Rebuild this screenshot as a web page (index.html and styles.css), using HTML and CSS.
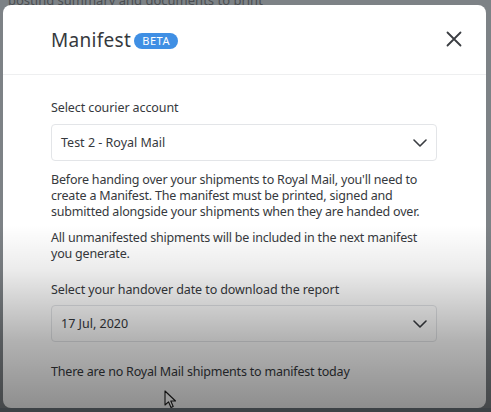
FILE: index.html
```html
<!DOCTYPE html>
<html>
<head>
<meta charset="utf-8">
<link rel="stylesheet" href="styles.css">
</head>
<body>
<div class="backdrop">
  <div class="behind">posting summary and documents to print</div>
  <div class="modal">
    <div class="modal-header">
      <h1 class="title">Manifest <span class="badge">BETA</span></h1>
      <button class="close" aria-label="Close">
        <svg width="16" height="16" viewBox="0 0 16 16"><path d="M1.5 1.5 L14.5 14.5 M14.5 1.5 L1.5 14.5" stroke="#3a3d42" stroke-width="1.8" fill="none" stroke-linecap="round"/></svg>
      </button>
    </div>
    <div class="modal-body">
      <label class="label">Select courier account</label>
      <div class="select">
        <span>Test 2 - Royal Mail</span>
        <svg class="chev" width="14" height="8" viewBox="0 0 14 8"><path d="M1 1 L7 7 L13 1" stroke="#3a3d42" stroke-width="1.6" fill="none" stroke-linecap="round" stroke-linejoin="round"/></svg>
      </div>
      <p class="text">Before handing over your shipments to Royal Mail, you'll need to create a Manifest. The manifest must be printed, signed and submitted alongside your shipments when they are handed over.</p>
      <p class="text">All unmanifested shipments will be included in the next manifest you generate.</p>
      <label class="label label-date">Select your handover date to download the report</label>
      <div class="select">
        <span>17 Jul, 2020</span>
        <svg class="chev" width="14" height="8" viewBox="0 0 14 8"><path d="M1 1 L7 7 L13 1" stroke="#3a3d42" stroke-width="1.6" fill="none" stroke-linecap="round" stroke-linejoin="round"/></svg>
      </div>
      <p class="text note">There are no Royal Mail shipments to manifest today</p>
    </div>
  </div>
  <div class="shade"></div>
  <svg class="cursor" width="14" height="20" viewBox="0 0 14 20"><path d="M1 1 L1 15 L4.5 11.8 L7 17.5 L9.2 16.5 L6.8 11 L11.5 11 Z" fill="#9a9a9a" stroke="#111" stroke-width="1.1" stroke-linejoin="round"/></svg>
  <div class="bottom-bar"></div>
</div>
</body>
</html>
```
FILE: styles.css
```css
html, body {
  margin: 0;
  padding: 0;
}
body {
  width: 491px;
  height: 412px;
  overflow: hidden;
  font-family: "Noto Sans", "Liberation Sans", sans-serif;
  background: #7d8286;
}
.backdrop {
  position: relative;
  width: 491px;
  height: 412px;
  padding: 5px 5px 0 3px;
  box-sizing: border-box;
}
.behind {
  position: absolute;
  left: 8px;
  top: -9px;
  font-size: 13px;
  color: #2a2d30;
  opacity: 0.6;
}
.modal {
  position: relative;
  background: #ffffff;
  border-radius: 8px;
  height: 403px;
  overflow: hidden;
}
.modal-header {
  display: flex;
  align-items: center;
  justify-content: space-between;
  height: 70px;
  padding: 0 24px 0 48px;
  border-bottom: 1px solid #eeeff0;
  box-sizing: border-box;
}
.title {
  margin: 0;
  font-size: 19px;
  font-weight: 400;
  color: #36393d;
  display: flex;
  align-items: center;
  gap: 3px;
  letter-spacing: 0.3px;
}
.badge {
  background: #3f8fe4;
  color: #ffffff;
  font-size: 11px;
  letter-spacing: 0.6px;
  padding: 1px 8px;
  border-radius: 9px;
  line-height: 14px;
  margin-top: 2px;
}
.close {
  border: 0;
  background: none;
  padding: 0;
  width: 16px;
  height: 16px;
  display: flex;
  margin-bottom: 2px;
}
.modal-body {
  padding: 25px 49px 0 48px;
  display: flex;
  flex-direction: column;
}
.label {
  font-size: 12.5px;
  color: #36393d;
  line-height: 16px;
  margin-bottom: 8px;
  letter-spacing: -0.1px;
}
.label-date {
  margin-top: 20px;
  margin-bottom: 7px;
}
.select {
  height: 37px;
  border: 1px solid #e3e5e8;
  border-radius: 4px;
  display: flex;
  align-items: center;
  justify-content: space-between;
  padding: 0 9px 0 9px;
  font-size: 12.5px;
  color: #36393d;
  box-sizing: border-box;
}
.chev {
  display: block;
}
.text {
  margin: 11px 0 0;
  font-size: 12.5px;
  line-height: 16px;
  color: #36393d;
  letter-spacing: -0.2px;
}
.text + .text {
  margin-top: 10px;
}
.note {
  margin-top: 22px;
}
.shade {
  position: absolute;
  left: 0;
  right: 0;
  top: 0;
  bottom: 0;
  background: linear-gradient(to bottom, rgba(0,0,0,0) 0, rgba(0,0,0,0) 225px, rgba(0,0,0,0.08) 270px, rgba(0,0,0,0.3) 340px, rgba(0,0,0,0.45) 412px);
  pointer-events: none;
}
.cursor {
  position: absolute;
  left: 164px;
  top: 390px;
}
.bottom-bar {
  position: absolute;
  left: 0;
  right: 0;
  bottom: 0;
  height: 4px;
  background: #3d4246;
}
```
